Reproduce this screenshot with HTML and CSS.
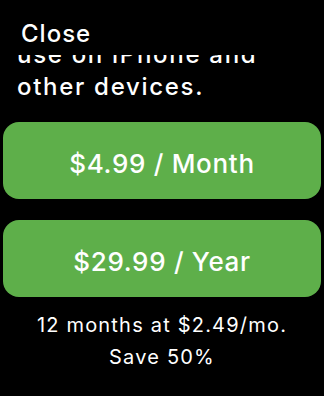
FILE: index.html
```html
<!DOCTYPE html>
<html>
<head>
<meta charset="utf-8">
<link rel="stylesheet" href="styles.css">
</head>
<body>
<div class="screen">
  <div class="header"><span class="close">Close</span></div>
  <div class="desc">
    <p class="desc-text">use on iPhone and<br>other devices.</p>
  </div>
  <div class="plans">
    <button class="plan">$4.99 / Month</button>
    <button class="plan">$29.99 / Year</button>
  </div>
  <p class="note">12 months at $2.49/mo.<br>Save 50%</p>
</div>
</body>
</html>
```
FILE: styles.css
```css
html, body {
  margin: 0;
  padding: 0;
  background: #000;
}
.screen {
  width: 324px;
  height: 396px;
  overflow: hidden;
  background: #000;
  color: #fff;
  font-family: Inter, "Noto Sans", sans-serif;
}
.header {
  height: 35px;
  padding: 20px 0 0 21px;
}
.close {
  font-size: 24px;
  line-height: 28px;
  font-weight: 500;
  letter-spacing: 1px;
}
.desc {
  height: 48px;
  overflow: hidden;
  display: flex;
  flex-direction: column;
  justify-content: flex-end;
  padding: 0 17px;
}
.desc-text {
  margin: 0;
  font-size: 24px;
  line-height: 32px;
  font-weight: 500;
  letter-spacing: 1.7px;
  white-space: nowrap;
}
.plans {
  display: flex;
  flex-direction: column;
  gap: 21px;
  padding: 19px 3px 0 3px;
}
.plan {
  height: 77px;
  border: none;
  border-radius: 16px;
  background: #5eaf4a;
  color: #fff;
  font-family: inherit;
  font-size: 26px;
  font-weight: 500;
  letter-spacing: 0.7px;
  padding: 6px 0 0 0;
  line-height: 32px;
}
.note {
  margin: 12px 0 0 0;
  text-align: center;
  font-size: 20px;
  line-height: 32px;
  letter-spacing: 1.2px;
}
```
